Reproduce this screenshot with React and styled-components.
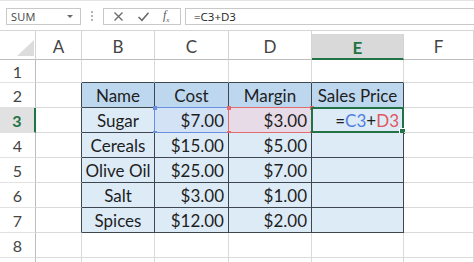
import React from "react";
import styled, { createGlobalStyle, css } from "styled-components";

const GlobalStyle = createGlobalStyle`
  html, body {
    margin: 0;
    padding: 0;
    background: #ffffff;
  }
  body {
    width: 474px;
    height: 262px;
    overflow: hidden;
    font-family: Lato, "Liberation Sans", sans-serif;
  }
`;

const COLS = ["A", "B", "C", "D", "E", "F"];

const Formula = () => (
  <>
    =<Ref $c="#4f7fdc">C3</Ref>+<Ref $c="#e0575b">D3</Ref>
  </>
);

const DATA = {
  2: ["Name", "Cost", "Margin", "Sales Price"],
  3: ["Sugar", "$7.00", "$3.00", <Formula key="f" />],
  4: ["Cereals", "$15.00", "$5.00", ""],
  5: ["Olive Oil", "$25.00", "$7.00", ""],
  6: ["Salt", "$3.00", "$1.00", ""],
  7: ["Spices", "$12.00", "$2.00", ""],
};

const MARKS = {
  "C3": { color: "#6a8ee0", fill: "#d4e2f6", handles: true },
  "D3": { color: "#e36a6d", fill: "#e7dbe7", handles: true },
  "E3": { color: "#217346", fill: "#ddebf7", thick: true },
};

const App = () => {
  // row 9 only peeks in at the bottom edge, so its number is not shown
  const rows = [1, 2, 3, 4, 5, 6, 7, 8, 9];
  return (
    <>
      <GlobalStyle />
      <Page>
        <Toolbar>
          <NameBox>
            SUM
            <Caret />
          </NameBox>
          <Grip>
            <i />
            <i />
            <i />
          </Grip>
          <IconBox>
            <svg width="11" height="11" viewBox="0 0 11 11">
              <path d="M1.5 1.5 L9.5 9.5 M9.5 1.5 L1.5 9.5" stroke="#6b6b6b" strokeWidth="1.3" fill="none" />
            </svg>
            <svg width="13" height="11" viewBox="0 0 13 11">
              <path d="M1.5 6 L5 9.3 L11.5 1.8" stroke="#6b6b6b" strokeWidth="1.6" fill="none" />
            </svg>
            <Fx>
              f<sub>x</sub>
            </Fx>
          </IconBox>
          <FormulaBar>=C3+D3</FormulaBar>
        </Toolbar>
        <Sheet>
          <Corner>
            <svg width="20" height="18" viewBox="0 0 20 18">
              <path d="M19 1 L19 17 L2 17 Z" fill="#dcdcdc" />
            </svg>
          </Corner>
          {COLS.map((c) => (
            <ColHead key={c} $active={c === "E"}>
              {c}
            </ColHead>
          ))}
          {rows.map((r) => (
            <React.Fragment key={r}>
              <RowHead $active={r === 3}>{r < 9 ? r : ""}</RowHead>
              {COLS.map((c, ci) => {
                const inTable = r >= 2 && r <= 7;
                const tableCol = ci >= 1 && ci <= 4;
                const darkRight = inTable && ci <= 4;
                const darkBottom = tableCol && r >= 1 && r <= 7;
                const mark = MARKS[c + r];
                let bg = "transparent";
                if (inTable && tableCol) bg = r === 2 ? "#bdd7ee" : "#ddebf7";
                if (mark) bg = mark.fill;
                const align =
                  r === 2 || ci === 1 ? "center" : "flex-end";
                const value = inTable && tableCol ? DATA[r][ci - 1] : "";
                return (
                  <Cell
                    key={c}
                    $darkRight={darkRight}
                    $darkBottom={darkBottom}
                    $bg={bg}
                    $align={align}
                  >
                    {value}
                    {mark && (
                      <Marker $color={mark.color} $thick={mark.thick}>
                        {mark.handles && (
                          <>
                            <Handle $color={mark.color} $v="top" $h="left" />
                            <Handle $color={mark.color} $v="top" $h="right" />
                            <Handle $color={mark.color} $v="bottom" $h="left" />
                            <Handle $color={mark.color} $v="bottom" $h="right" />
                          </>
                        )}
                        {mark.thick && <FillHandle />}
                      </Marker>
                    )}
                  </Cell>
                );
              })}
            </React.Fragment>
          ))}
        </Sheet>
      </Page>
    </>
  );
};

export default App;

const Page = styled.div`
  width: 474px;
  height: 262px;
  overflow: hidden;
  background: #ffffff;
  border-top: 1px solid #e4e4e4;
  box-sizing: border-box;
`;

const Toolbar = styled.div`
  height: 30px;
  box-sizing: border-box;
  border-bottom: 1px solid #d6d6d6;
  display: flex;
  align-items: center;
  padding: 1px 0 0 6px;
  font-family: "Segoe UI", "Open Sans", "Liberation Sans", sans-serif;
  font-size: 11px;
  color: #444444;
`;

const Box = styled.div`
  height: 17px;
  box-sizing: border-box;
  border: 1px solid #c9c9c9;
  display: flex;
  align-items: center;
  background: #ffffff;
`;

const NameBox = styled(Box)`
  width: 75px;
  padding: 0 0 0 4px;
  position: relative;
  letter-spacing: 0.2px;
`;

const Caret = styled.span`
  position: absolute;
  right: 7px;
  top: 6px;
  border-left: 3px solid transparent;
  border-right: 3px solid transparent;
  border-top: 3px solid #6a6a6a;
`;

const Grip = styled.div`
  width: 22px;
  display: flex;
  flex-direction: column;
  align-items: center;
  gap: 2px;
  i {
    width: 2px;
    height: 2px;
    background: #b5b5b5;
  }
`;

const IconBox = styled(Box)`
  width: 78px;
  justify-content: space-around;
  padding: 0 4px 0 2px;
`;

const Fx = styled.span`
  font-family: "Liberation Serif", serif;
  font-style: italic;
  font-size: 12px;
  color: #5a5a5a;
  sub {
    font-size: 7px;
  }
`;

const FormulaBar = styled(Box)`
  flex: 1;
  margin-left: 4px;
  padding-left: 8px;
  border-right: none;
  color: #222222;
  font-size: 11.5px;
`;

const Sheet = styled.div`
  display: grid;
  grid-template-columns: 36px 46px 73px 74px 83px 92px 1fr;
  grid-template-rows: 29px 23px repeat(8, 25px);
  font-family: Lato, "Liberation Sans", sans-serif;
`;

const Corner = styled.div`
  border-right: 1px solid #d4d4d4;
  border-bottom: 1px solid #bdbdbd;
  display: flex;
  align-items: flex-end;
  justify-content: flex-end;
  padding: 0 0 2px 0;
`;

const ColHead = styled.div`
  display: flex;
  align-items: center;
  justify-content: center;
  padding-top: 2px;
  font-size: 17px;
  color: #444444;
  border-right: 1px solid #d4d4d4;
  border-bottom: 1px solid #bdbdbd;
  ${(p) =>
    p.$active &&
    css`
      background: #d9d9d9;
      color: #217346;
      font-weight: 700;
      border-bottom: 2px solid #217346;
      margin-top: 3px;
    `}
`;

const RowHead = styled.div`
  display: flex;
  align-items: center;
  justify-content: center;
  font-size: 16px;
  color: #444444;
  border-right: 1px solid #bdbdbd;
  border-bottom: 1px solid #e2e2e2;
  ${(p) =>
    p.$active &&
    css`
      background: #e1e1e1;
      color: #217346;
      font-weight: 700;
      border-right: 2px solid #217346;
    `}
`;

const Cell = styled.div`
  position: relative;
  display: flex;
  align-items: center;
  justify-content: ${(p) => p.$align};
  padding: 0 4px;
  font-size: 17px;
  color: #1e1e1e;
  white-space: nowrap;
  background: ${(p) => p.$bg};
  border-right: 1px solid ${(p) => (p.$darkRight ? "#3e4650" : "#dadada")};
  border-bottom: 1px solid ${(p) => (p.$darkBottom ? "#3e4650" : "#dadada")};
`;

const Ref = styled.span`
  color: ${(p) => p.$c};
`;

const Marker = styled.div`
  position: absolute;
  left: -1px;
  top: -1px;
  right: -1px;
  bottom: -1px;
  border: ${(p) => (p.$thick ? 2 : 1)}px solid ${(p) => p.$color};
  pointer-events: none;
`;

const Handle = styled.span`
  position: absolute;
  width: 4px;
  height: 4px;
  background: ${(p) => p.$color};
  ${(p) => p.$v}: -2.5px;
  ${(p) => p.$h}: -2.5px;
`;

const FillHandle = styled.span`
  position: absolute;
  right: -4px;
  bottom: -4px;
  width: 5px;
  height: 5px;
  background: #217346;
  border: 1px solid #ffffff;
`;
